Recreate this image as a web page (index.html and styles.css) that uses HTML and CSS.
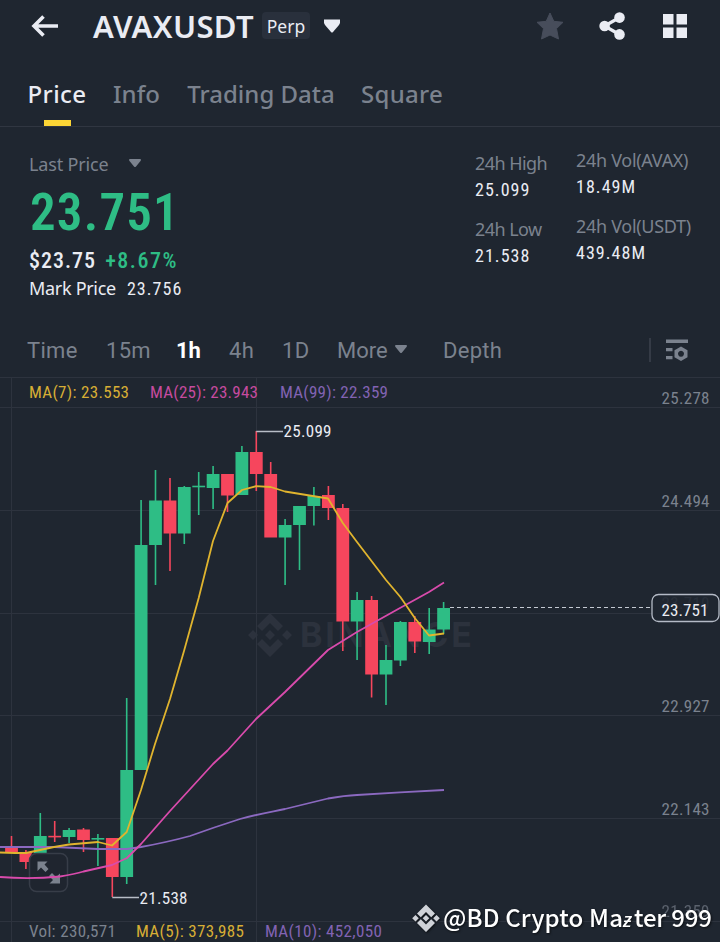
FILE: index.html
```html
<!DOCTYPE html>
<html lang="en">
<head>
<meta charset="utf-8">
<title>AVAXUSDT Perp</title>
<link rel="stylesheet" href="styles.css">
</head>
<body>
<header class="topbar">
  <svg class="back" width="28" height="22" viewBox="0 0 28 22"><path d="M12.500 1.500L3 11L12.500 20.500M3.500 11H27" fill="none" stroke="#eaecf3" stroke-width="3.600"/></svg>
  <h1 class="pair">AVAXUSDT</h1>
  <span class="perp">Perp</span>
  <svg class="caret-lg" width="18" height="14" viewBox="0 0 18 14"><path d="M1 .5H17Q17.500 4 16 6L10 13Q9 14 8 13L2 6Q.5 4 1 .5Z" fill="#eaecf3"/></svg>
  <div class="actions">
    <svg width="28" height="28" viewBox="0 0 28 28"><path d="M14 1L17.800 9.300L27 10.300L20.500 16.600L22.500 27L14 23L5.500 27L7.500 16.600L1 10.300L10.200 9.300Z" fill="#474d5b" stroke="#474d5b" stroke-width="1" stroke-linejoin="round"/></svg>
    <svg width="28" height="28" viewBox="0 0 28 28"><path d="M21.500 5.500L6.500 14L21.500 22.500" fill="none" stroke="#eaecf3" stroke-width="3.200"/><circle cx="21.500" cy="5.600" r="5.300" fill="#eaecf3"/><circle cx="6.600" cy="14" r="5.300" fill="#eaecf3"/><circle cx="21.500" cy="22.400" r="5.300" fill="#eaecf3"/></svg>
    <svg class="apps" width="26" height="26" viewBox="0 0 26 26"><path d="M1 1h10.500v10.500H1zM14.500 1H25v10.500H14.500zM1 14.500h10.500V25H1zM14.500 14.500H25V25H14.500z" fill="#eaecf3"/></svg>
  </div>
</header>

<nav class="tabs">
  <span class="tab tab-on">Price</span>
  <span class="tab tab-info">Info</span>
  <span class="tab tab-data">Trading Data</span>
  <span class="tab tab-square">Square</span>
</nav>

<section class="summary">
  <div class="quote">
    <div class="last-label">Last Price <svg width="14" height="10" viewBox="0 0 14 10"><path d="M1.500 1h11q1 1 0 2L8 8.500q-1 1-2 0L1.500 3q-1-1 0-2Z" fill="#7b828e"/></svg></div>
    <div class="last">23.751</div>
    <div class="fiat"><span class="usd">$23.75</span><span class="chg">+8.67%</span></div>
    <div class="mark"><span class="mark-label">Mark Price</span><span class="mark-val">23.756</span></div>
  </div>
  <dl class="stats">
    <dt>24h High</dt><dd>25.099</dd>
    <dt>24h Low</dt><dd>21.538</dd>
  </dl>
  <dl class="stats stats-vol">
    <dt>24h Vol(AVAX)</dt><dd>18.49M</dd>
    <dt>24h Vol(USDT)</dt><dd>439.48M</dd>
  </dl>
</section>

<nav class="intervals">
  <span>Time</span><span>15m</span><span class="on">1h</span><span>4h</span><span>1D</span>
  <span class="more">More <svg width="14" height="10" viewBox="0 0 14 10"><path d="M1.500 1h11q1 1 0 2L8 8.500q-1 1-2 0L1.500 3q-1-1 0-2Z" fill="#7b828e"/></svg></span>
  <span>Depth</span>
  <span class="config"><svg width="24" height="24" viewBox="0 0 24 24"><g fill="#7b828e"><path d="M1 1.500h22V5H1zM1 10h6.500v3.200H1zM1 18h6.500v3.200H1z"/><path fill-rule="evenodd" d="M16 8.500L22.500 12.200V19.300L16 23L9.500 19.300V12.200ZM16 12.700a3 3 0 1 0 .01 0Z"/></g></svg></span>
</nav>

<main class="chart">
<svg width="720" height="565" viewBox="0 377 720 565">
  <g class="grid"><path d="M0 377.500H720M0 407.500H720M0 510.500H720M0 613.500H720M0 715.500H720M0 818.500H720M0 921.500H720M11.500 377V942M256.500 377V942"/></g>

  <g class="brand" fill="#2c323d">
    <path d="M270 613l13 13-5 5-8-8-8 8-5-5ZM270 657l13-13-5-5-8 8-8-8-5 5ZM270 630l5 5-5 5-5-5ZM253 630l5 5-5 5-5-5ZM287 630l5 5-5 5-5-5Z"/>
    <text x="300" y="647" class="wordmark" textLength="172">BINANCE</text>
  </g>

  <g class="axis">
    <text x="661.500" y="404" textLength="48">25.278</text>
    <text x="661.500" y="507" textLength="48">24.494</text>
    <text x="661.500" y="712" textLength="48">22.927</text>
    <text x="661.500" y="815" textLength="48">22.143</text>
    <text x="661.500" y="917" textLength="48" class="dim">21.359</text>
  </g>

  <g class="up-wick"><path d="M40.300 813V853M69.100 828V843M97.900 834V866M126.700 698V884M141.100 500V770M155.500 470V585M184.300 486V544M198.700 472V515M213.100 466V509M241.900 446V495M285.100 519V585M299.500 506V570M313.900 487V525.500M357.100 592V660M386 645V705M400.400 621V666M429.200 608V654M443.600 602V634"/></g>
  <g class="down-wick"><path d="M11.500 836V853M25.900 850V869M54.700 821V842M83.500 828V852M112.300 838V897M170 478V571M227.500 474V512M256.300 431V491M270.700 462V537M328.400 486V520M342.800 504V651M371.600 596V697.500M414.800 616V653"/></g>
  <g fill="#2ebd85">
    <rect x="33.900" y="836" width="12.800" height="17"/>
    <rect x="62.700" y="830" width="12.800" height="7"/>
    <rect x="91.500" y="838" width="12.800" height="1.600"/>
    <rect x="120.300" y="770" width="12.800" height="107"/>
    <rect x="134.700" y="545" width="12.800" height="225"/>
    <rect x="149.100" y="500.500" width="12.800" height="44.500"/>
    <rect x="177.900" y="487" width="12.800" height="46.500"/>
    <rect x="192.300" y="485.700" width="12.800" height="1.600"/>
    <rect x="206.700" y="474" width="12.800" height="14"/>
    <rect x="235.500" y="452" width="12.800" height="43"/>
    <rect x="278.700" y="525" width="12.800" height="12.500"/>
    <rect x="293.100" y="506" width="12.800" height="19"/>
    <rect x="307.500" y="496" width="12.800" height="10"/>
    <rect x="350.700" y="600" width="12.800" height="21.500"/>
    <rect x="379.600" y="660" width="12.800" height="14.500"/>
    <rect x="394" y="622" width="12.800" height="38.500"/>
    <rect x="422.800" y="629.500" width="12.800" height="12.500"/>
    <rect x="437.200" y="608" width="12.800" height="21.500"/>
  </g>
  <g fill="#f6465d">
    <rect x="5.100" y="847" width="12.800" height="6"/>
    <path d="M19.500 852H32.300L29 862H19.500Z"/>
    <rect x="48.300" y="835.800" width="12.800" height="1.600"/>
    <rect x="77.100" y="829.500" width="12.800" height="10.500"/>
    <rect x="105.900" y="838" width="12.800" height="39"/>
    <rect x="163.600" y="500.500" width="12.800" height="33"/>
    <rect x="221.100" y="474" width="12.800" height="21.500"/>
    <rect x="249.900" y="452" width="12.800" height="22"/>
    <rect x="264.300" y="474" width="12.800" height="63.500"/>
    <rect x="322" y="495" width="12.800" height="13"/>
    <rect x="336.400" y="508" width="12.800" height="113.500"/>
    <rect x="365.200" y="600" width="12.800" height="74.500"/>
    <rect x="408.400" y="622" width="12.800" height="19.500"/>
  </g>

  <g class="expand">
    <rect x="29.500" y="853.500" width="38" height="38" rx="7"/>
    <path d="M37.500 861.500h10l-3 3 4 4.500-3 3-4.500-4.500-3.500 3.500ZM60 883.500h-10.500l3.500-3.500-4-4 3-3 4 4 4-3.500Z"/>
  </g>

  <g class="lines">
    <path stroke="#8b69c0" d="M0 847H54L98 849H127L141 847Q168 842 190 836Q215 827 240 819C258 814 268 812.500 285 809L328 798.500Q345 795.500 357 795L400 792.300L444 790"/>
    <path stroke="#d94bac" d="M0 877Q30 879.500 60 876.500Q75 874 83.500 871.500L112 865L127 858L141 844L170 811L213 764L227.500 750.500L256 719L285 692L328 650L357 632L400 608L429 592L444 582.500"/>
    <path stroke="#e0b42e" d="M0 852.500L15 853H26L40 850L54 847L69 844.500L98 842L112 845.500L126.700 832L141 790L155 744L170 699L184 651L198.700 598L213 541L227.500 503L242 490L256 486.200L270.700 487L285 491.500L328 498.500L342.800 523L357 542L386 580L400.400 597L414.800 618L429 635.500L444 633.500"/>
  </g>

  <path d="M256.300 431.500H283M112.300 897.500H139" stroke="#b7bdc6" stroke-width="1.500"/>
  <g class="extreme">
    <text x="283.500" y="437" textLength="48">25.099</text>
    <text x="139.500" y="904" textLength="48">21.538</text>
  </g>

  <path d="M450 607.500H652" stroke="#c4c9d2" stroke-width="1.200" stroke-dasharray="4 3"/>
  <rect x="652" y="594.500" width="67" height="27" rx="6.500" fill="#1f2630" stroke="#b4bac6" stroke-width="1.300"/>
  <text x="661.500" y="609" textLength="48" class="ghost">23.710</text>
  <text x="661.500" y="616" textLength="47" class="now">23.751</text>

  <g class="legend">
    <text x="29" y="398" textLength="100" fill="#d7ae35">MA(7): 23.553</text>
    <text x="150" y="398" textLength="108" fill="#c64b9f">MA(25): 23.943</text>
    <text x="280" y="398" textLength="108" fill="#8263b3">MA(99): 22.359</text>
    <text x="29" y="937" textLength="87" fill="#7b828e">Vol: 230,571</text>
    <text x="136" y="937" textLength="108" fill="#d7ae35">MA(5): 373,985</text>
    <text x="265" y="937" textLength="117" fill="#8263b3">MA(10): 452,050</text>
  </g>

  <g class="credit">
    <path d="M426 904.500l9 9-3.800 3.800-5.200-5.200-5.200 5.200-3.800-3.800ZM426 932l9-9-3.800-3.800-5.200 5.200-5.200-5.200-3.800 3.800ZM426 915l3.300 3.300-3.300 3.300-3.300-3.300ZM415.500 915l3.300 3.300-3.300 3.300-3.300-3.300ZM436.500 915l3.300 3.300-3.300 3.300-3.300-3.300Z" fill="#cfd2d8"/>
    <text x="443" y="926.500" textLength="180">@BD Crypto Ma</text>
    <text x="623" y="927" class="zed">ƶ</text>
    <text x="634" y="926.500" textLength="78">ter 999</text>
  </g>
</svg>
</main>
</body>
</html>
```
FILE: styles.css
```css
* { box-sizing: border-box; }
body {
  margin: 0;
  width: 720px;
  height: 942px;
  overflow: hidden;
  background: #1f2630;
  color: #eaecf3;
  font-family: "Noto Sans", sans-serif;
}
svg { display: block; flex: none; }

.topbar { display: flex; align-items: center; height: 52px; padding: 0 32px 0 31px; }
.pair { margin: 0 0 0 34px; width: 169px; font-size: 31px; font-weight: 600; line-height: 40px; letter-spacing: .35px; }
.perp { width: 48px; height: 27px; margin-top: -2px; border-radius: 4px; background: #29303c; font-size: 17.500px; line-height: 28px; text-align: center; }
.caret-lg { margin-left: 12.500px; margin-top: -1px; }
.actions { display: flex; align-items: center; gap: 34px; margin-left: auto; }
.apps { margin-left: 2.500px; }

.tabs { display: flex; height: 75px; padding-left: 28px; border-bottom: 1px solid #303641; font-size: 24px; font-weight: 500; color: #7b828e; }
.tab { display: flex; flex-direction: column; align-items: center; line-height: 33px; padding-top: 25px; letter-spacing: 0; }
.tab-on { width: 58px; color: #eaecf3; letter-spacing: .4px; }
.tab-on::after { content: ""; width: 27px; height: 6px; margin-top: 10px; background: #fcd535; }
.tab-info { margin-left: 27px; width: 47px; }
.tab-data { margin-left: 28px; width: 146px; white-space: nowrap; }
.tab-square { margin-left: 27px; width: 82px; letter-spacing: .3px; }

.summary { display: flex; height: 196px; padding: 23px 0 0 29px; font-size: 18px; }
.quote { width: 446px; }
.last-label { display: flex; align-items: center; gap: 19px; height: 28px; letter-spacing: -.15px; color: #7b828e; }
.last-label svg { margin-top: -2px; }
.last { height: 69px; margin-left: 1px; font: 600 51px/70px Roboto, sans-serif; font-stretch: 85%; letter-spacing: 1.200px; color: #2ebd85; }
.fiat { display: flex; gap: 9px; font: 500 22px/28px Roboto, sans-serif; font-stretch: 85%; letter-spacing: 1px; }
.chg { color: #2ebd85; letter-spacing: 1.500px; }
.mark { display: flex; gap: 11px; line-height: 27px; letter-spacing: -.3px; }
.mark-val { font-family: Roboto, sans-serif; font-stretch: 85%; letter-spacing: 1.050px; }
.stats { width: 101px; margin: 0; }
.stats dt { height: 26px; line-height: 26px; letter-spacing: -.55px; color: #7b828e; white-space: nowrap; }
.stats dd { height: 40px; margin: 0; font: 400 18px/27px Roboto, sans-serif; font-stretch: 85%; letter-spacing: 1.050px; }
.stats-vol { width: 130px; margin-top: -3px; }
.stats-vol dt { letter-spacing: -.3px; }

.intervals { display: grid; grid-template-columns: 79px 70px 53px 53px 55px 106px 206px 40px; align-items: center; height: 54px; padding: 1px 0 0 27px; font: 400 22px/30px Roboto, sans-serif; letter-spacing: .3px; color: #7b828e; }
.intervals .on { color: #fff; font-weight: 700; letter-spacing: 0; }
.more { display: flex; align-items: center; gap: 6px; letter-spacing: 0; }
.more svg { margin-top: -3px; }
.config { border-left: 2px solid #353b46; padding-left: 14px; margin-top: -2px; }

.chart text { font-family: Roboto, sans-serif; font-size: 17px; font-stretch: 85%; }
.grid path { stroke: #2d333e; fill: none; }
.chart .wordmark { font: 700 34px Inter, sans-serif; }
.axis { fill: #7b828e; }
.dim { opacity: .65; }
.up-wick path { stroke: #2ebd85; stroke-width: 1.600; }
.down-wick path { stroke: #f6465d; stroke-width: 1.600; }
.lines path { fill: none; stroke-width: 1.800; stroke-linejoin: round; }
.expand rect { fill: #1f2630; fill-opacity: .8; stroke: #373d48; stroke-width: 1.500; }
.expand path { fill: #7b828e; }
.extreme, .now { fill: #eaecf3; }
.ghost { fill: #29303b; }
.credit { fill: #fff; filter: drop-shadow(1px 1px 1px #0009); }
.chart .credit text { font: 500 24px "Noto Sans CJK SC", "Noto Sans", sans-serif; }
.chart .credit .zed { font: italic 500 20px "Noto Sans", sans-serif; }
```
